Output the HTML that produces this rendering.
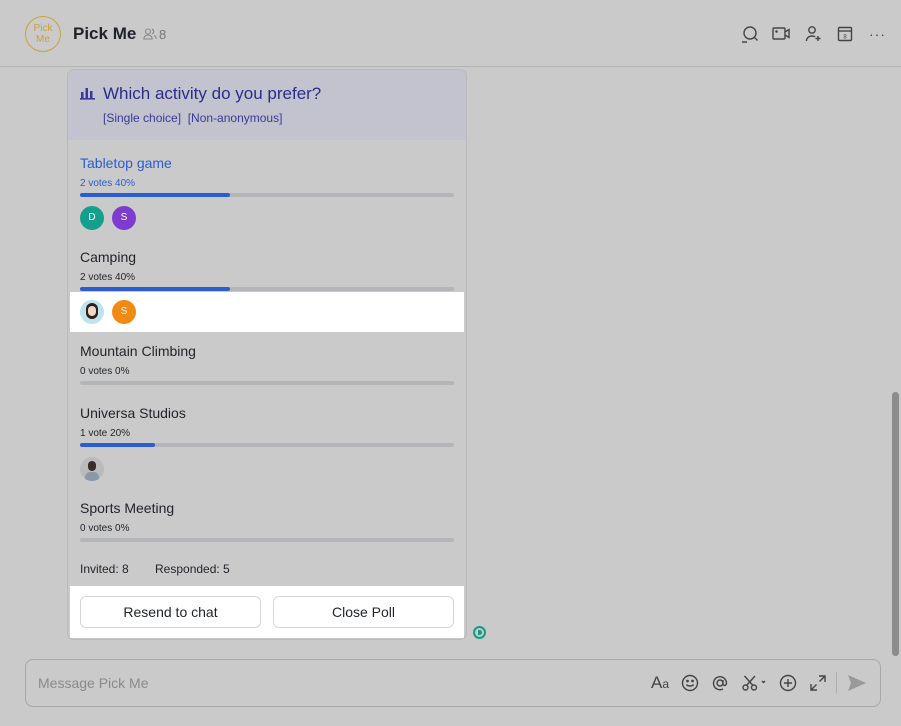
<!DOCTYPE html>
<html><head><meta charset="utf-8"><style>
*{box-sizing:border-box;margin:0;padding:0}
body{width:901px;height:726px;background:#cacaca;font-family:"Liberation Sans",sans-serif;position:relative;overflow:hidden;color:#1f2329}
.abs{position:absolute}
.hdr{left:0;top:0;width:901px;height:67px;border-bottom:1px solid #b4b4b4}
.card{left:67px;top:69px;width:400px;height:571px;border:1px solid #b9b9b9;border-radius:7px;overflow:hidden}
.ch{left:0;top:0;width:398px;height:70px;background:#c2c3ce}
.opt{font-size:14px;left:12px}
.vt{font-size:10px;left:12px}
.bar{left:12px;width:374px;height:4px;border-radius:2px;background:#b4b5b9}
.bar i{display:block;height:4px;border-radius:2px;background:#2b5dd0}
.av{width:24px;height:24px;border-radius:50%;color:#fff;font-size:10px;text-align:center;line-height:24px}
.btn{top:526px;height:32px;width:181px;border:1px solid #d6d6d6;border-radius:6px;background:#fff;font-size:14px;text-align:center;line-height:30px}
svg{position:absolute}
</style></head><body>
<div class="abs hdr"></div>
<div class="abs" style="left:25px;top:16px;width:36px;height:36px;border-radius:50%;border:1.5px solid #c9a23d;color:#c9a23d;font-size:10px;line-height:11px;text-align:center;padding-top:6px">Pick<br>Me</div>
<div class="abs" style="left:73px;top:24px;font-size:17px;font-weight:bold;color:#1f2329">Pick Me</div>
<svg style="left:143px;top:28px" width="14" height="12" viewBox="0 0 14 12" fill="none" stroke="#888" stroke-width="1.1"><circle cx="5" cy="3.5" r="2.5"/><path d="M0.8 11c0-2.5 2-4 4.2-4s4.2 1.5 4.2 4z"/><path d="M9 1.2a2.4 2.4 0 010 4.6M11 7.5c1.3.6 2.2 1.8 2.2 3.5"/></svg>
<div class="abs" style="left:159px;top:27px;font-size:13px;color:#777">8</div>
<svg style="left:740px;top:25px" width="20" height="20" viewBox="0 0 20 20" fill="none" stroke="#444" stroke-width="1.4"><circle cx="10" cy="8" r="6"/><path d="M14 12l3.5 3.5M2 17h5"/></svg>
<svg style="left:772px;top:26px" width="20" height="16" viewBox="0 0 20 16" fill="none" stroke="#444" stroke-width="1.4"><rect x="1" y="2" width="12" height="11" rx="1"/><path d="M13 6l4-2.5v8L13 9"/><circle cx="4.5" cy="5.5" r=".6" fill="#444"/></svg>
<svg style="left:805px;top:25px" width="18" height="18" viewBox="0 0 18 18" fill="none" stroke="#444" stroke-width="1.4"><circle cx="7" cy="5" r="3.2"/><path d="M1.5 16c0-3 2.5-5 5.5-5 1.3 0 2.3.3 3.2.8M13 11v5M10.5 13.5h5"/></svg>
<svg style="left:837px;top:26px" width="16" height="16" viewBox="0 0 16 16" fill="none" stroke="#444" stroke-width="1.4"><rect x="1.5" y="1.5" width="13" height="13" rx="1"/><path d="M1.5 5h13"/><text x="8" y="12.5" font-size="6" text-anchor="middle" fill="#444" stroke="none" font-family="Liberation Sans">8</text></svg>
<div class="abs" style="left:869px;top:26px;font-size:14px;color:#444;letter-spacing:1px">···</div>

<div class="abs card">
 <div class="abs ch"></div>
 <svg style="left:12px;top:16px" width="15" height="14" viewBox="0 0 15 14" fill="#3a3a9a"><rect x="1" y="6" width="2.5" height="6"/><rect x="5.5" y="2" width="2.5" height="10"/><rect x="10" y="5" width="2.5" height="7"/><rect x="0" y="12" width="15" height="1.6"/></svg>
 <div class="abs" style="left:35px;top:14px;font-size:17px;color:#2c2c8c">Which activity do you prefer?</div>
 <div class="abs" style="left:35px;top:41px;font-size:12px;color:#3a3a96">[Single choice]&nbsp;&nbsp;[Non-anonymous]</div>

 <div class="abs opt" style="top:85px;color:#2b5dd0">Tabletop game</div>
 <div class="abs vt" style="top:108px;color:#2b5dd0">2 votes 40%</div>
 <div class="abs bar" style="top:123px"><i style="width:150px"></i></div>
 <div class="abs av" style="left:12px;top:136px;background:#14a08a">D</div>
 <div class="abs av" style="left:44px;top:136px;background:#7d3bd0">S</div>

 <div class="abs opt" style="top:179px">Camping</div>
 <div class="abs vt" style="top:202px">2 votes 40%</div>
 <div class="abs bar" style="top:217px"><i style="width:150px"></i></div>
 <div class="abs" style="left:2px;top:222px;width:394px;height:40px;background:#fff"></div>
 <div class="abs av" style="left:12px;top:230px;background:#bfe3ef;overflow:hidden"><div style="position:absolute;left:6px;top:3px;width:12px;height:16px;border-radius:6px;background:#2a211d"></div><div style="position:absolute;left:8px;top:6px;width:8px;height:10px;border-radius:4px;background:#f2d6c6"></div></div>
 <div class="abs av" style="left:44px;top:230px;background:#f08a14">S</div>

 <div class="abs opt" style="top:273px">Mountain Climbing</div>
 <div class="abs vt" style="top:296px">0 votes 0%</div>
 <div class="abs bar" style="top:311px"></div>

 <div class="abs opt" style="top:335px">Universa Studios</div>
 <div class="abs vt" style="top:358px">1 vote 20%</div>
 <div class="abs bar" style="top:373px"><i style="width:75px"></i></div>
 <div class="abs av" style="left:12px;top:387px;background:#bbb;overflow:hidden"><div style="position:absolute;left:8px;top:4px;width:8px;height:10px;border-radius:4px;background:#3a2c26"></div><div style="position:absolute;left:5px;top:15px;width:14px;height:10px;border-radius:6px;background:#8a98a8"></div></div>

 <div class="abs opt" style="top:430px">Sports Meeting</div>
 <div class="abs vt" style="top:453px">0 votes 0%</div>
 <div class="abs bar" style="top:468px"></div>

 <div class="abs" style="left:12px;top:492px;font-size:12px">Invited: 8</div>
 <div class="abs" style="left:87px;top:492px;font-size:12px">Responded: 5</div>
 <div class="abs" style="left:2px;top:516px;width:394px;height:52px;background:#fff"></div>
 <div class="abs btn" style="left:12px">Resend to chat</div>
 <div class="abs btn" style="left:205px">Close Poll</div>
</div>
<div class="abs" style="left:473px;top:626px;width:13px;height:13px;border-radius:50%;border:2px solid #159a82"><div style="position:absolute;left:3px;top:2px;width:4px;height:5px;background:#159a82;border-radius:0 3px 3px 0"></div></div>

<div class="abs" style="left:892px;top:392px;width:7px;height:264px;border-radius:4px;background:#8c8c8c"></div>

<div class="abs" style="left:25px;top:659px;width:856px;height:48px;border:1px solid #a8a8a8;border-radius:8px"></div>
<div class="abs" style="left:38px;top:675px;font-size:14px;color:#8a8a8a">Message Pick Me</div>
<div class="abs" style="left:651px;top:673px;font-size:17px;color:#444">A<span style="font-size:12px">a</span></div>
<svg style="left:680px;top:673px" width="20" height="20" viewBox="0 0 20 20" fill="none" stroke="#444" stroke-width="1.4"><circle cx="10" cy="10" r="7.5"/><path d="M6.5 11.5c1 2 6 2 7 0"/><circle cx="7.5" cy="8" r=".7" fill="#444"/><circle cx="12.5" cy="8" r=".7" fill="#444"/></svg>
<svg style="left:710px;top:673px" width="20" height="20" viewBox="0 0 20 20" fill="none" stroke="#444" stroke-width="1.4"><circle cx="10" cy="10" r="3"/><path d="M13 7v4c0 2 3.5 2 3.5-1A6.5 6.5 0 1 0 13 16"/></svg>
<svg style="left:741px;top:673px" width="28" height="20" viewBox="0 0 28 20" fill="none" stroke="#444" stroke-width="1.4"><circle cx="4.5" cy="14.5" r="2.5"/><circle cx="13" cy="14.5" r="2.5"/><path d="M5.5 12.5L14 3M12 12.5L3.5 3M21 8l1.5 1.5L24 8"/></svg>
<svg style="left:778px;top:673px" width="20" height="20" viewBox="0 0 20 20" fill="none" stroke="#444" stroke-width="1.4"><circle cx="10" cy="10" r="7.5"/><path d="M10 6v8M6 10h8"/></svg>
<svg style="left:808px;top:673px" width="20" height="20" viewBox="0 0 20 20" fill="none" stroke="#444" stroke-width="1.4"><path d="M11 3h6v6M17 3l-5.5 5.5M9 17H3v-6M3 17l5.5-5.5"/></svg>
<div class="abs" style="left:836px;top:672px;width:1px;height:22px;background:#b0b0b0"></div>
<svg style="left:847px;top:673px" width="20" height="20" viewBox="0 0 20 20" fill="#999"><path d="M1 2l18 8-18 8 3-8z"/></svg>
</body></html>
